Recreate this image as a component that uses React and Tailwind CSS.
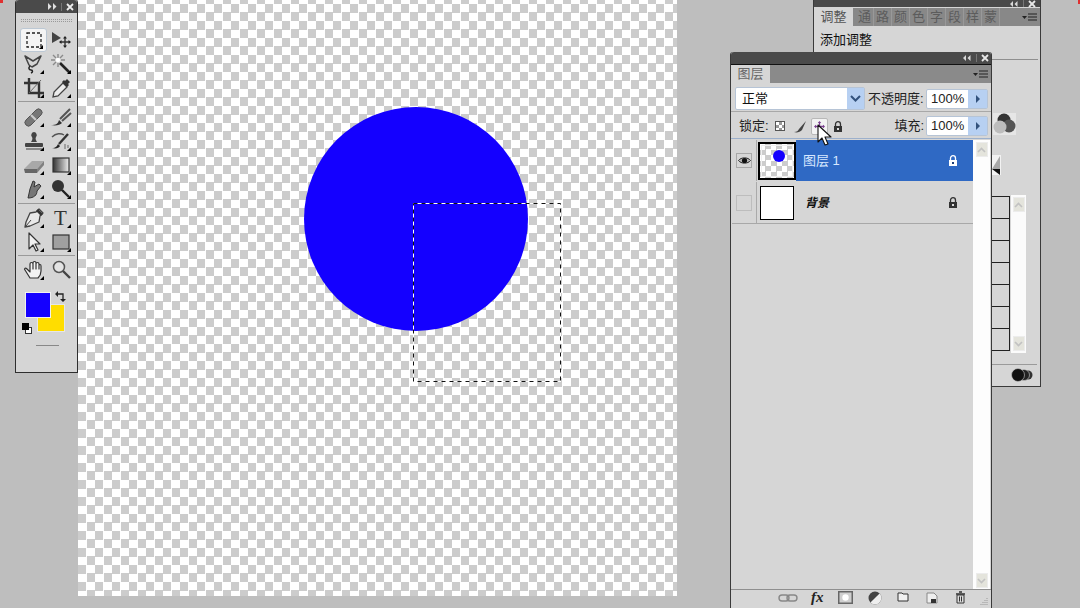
const uiFont = "font-['Liberation_Sans','Noto_Sans_CJK_SC',sans-serif]";

const Flag = () => (
  <span className="absolute right-[3px] bottom-[2px] w-0 h-0 border-l-[4px] border-l-transparent border-b-[4px] border-b-black" />
);

const Tool = ({ children, flag = true, active = false }) => (
  <div
    className={`relative w-[27px] h-[24px] flex items-center justify-center ${
      active ? "bg-[#f4f4f4] border border-[#bcc8d4] rounded-[3px]" : ""
    }`}
  >
    <svg width="22" height="22" viewBox="0 0 22 22">
      {children}
    </svg>
    {flag && <Flag />}
  </div>
);

const Sep = ({ className = "" }) => (
  <div className={`h-px mx-[2px] bg-[#9a9a9a] ${className}`} />
);

const HeaderBtns = () => (
  <div className="flex items-center gap-[4px]">
    <svg width="10" height="8" viewBox="0 0 10 8">
      <path d="M4 1L1 4l3 3zM8.5 1l-3 3 3 3z" fill="#d8d8d8" />
    </svg>
    <span className="w-px h-[8px] bg-[#777]" />
    <svg width="8" height="8" viewBox="0 0 8 8">
      <path d="M1 1l6 6M7 1l-6 6" stroke="#e8e8e8" strokeWidth="1.8" />
    </svg>
  </div>
);

const MenuIcon = () => (
  <svg width="16" height="9" viewBox="0 0 16 9">
    <path d="M0 3h5L2.5 6z" fill="#222" />
    <path d="M6 1h9M6 4h9M6 7h9" stroke="#222" strokeWidth="1.2" />
  </svg>
);

const Toolbar = () => (
  <div className="absolute left-[15px] top-0 w-[63px] h-[373px] bg-[#d5d5d5] border-x border-b border-[#2e2e2e] rounded-t-[3px]">
    <div className="h-[13px] bg-[#4a4a4a] flex items-center justify-end pr-[3px] gap-[4px] rounded-t-[3px]">
      <svg width="9" height="7" viewBox="0 0 9 7">
        <path d="M0 0l3.5 3.5L0 7zM5 0l3.5 3.5L5 7z" fill="#e0e0e0" />
      </svg>
      <span className="w-px h-[8px] bg-[#777]" />
      <svg width="8" height="8" viewBox="0 0 8 8">
        <path d="M1 1l6 6M7 1l-6 6" stroke="#eee" strokeWidth="1.8" />
      </svg>
    </div>
    <div className="mt-[6px] mx-[5px] h-[3px] border-y border-dotted border-[#999]" />

    <div className="mt-[6px] px-[4px] grid grid-cols-[27px_27px]">
      <Tool active>
        <rect x="4" y="4" width="14" height="14" fill="none" stroke="#222" strokeWidth="1.3" strokeDasharray="3 2" />
      </Tool>
      <Tool flag={false}>
        <path d="M2 3l9 6-9 5z" fill="#444" />
        <path d="M15 8v10M10 13h10" stroke="#333" strokeWidth="1.4" />
        <path d="M15 7l-2 2.5h4zM15 19l-2-2.5h4zM9 13l2.5-2v4zM21 13l-2.5-2v4z" fill="#222" />
      </Tool>
      <Tool>
        <path d="M2 3l8 5 8-5-4 8-5 3-3-2z" fill="none" stroke="#444" strokeWidth="1.5" strokeLinejoin="round" />
        <path d="M7 13c-2 2-1 4 1 4s2 2 0 3" fill="none" stroke="#222" strokeWidth="1.5" />
      </Tool>
      <Tool>
        <path d="M10 10l10 10" stroke="#222" strokeWidth="2.6" />
        <path d="M8 1v4M8 10v4M1 7h4M11 7h4M3 2l3 3M13 2l-3 3M3 12l3-3" stroke="#8a8a8a" strokeWidth="1.4" />
        <circle cx="8" cy="7" r="2.2" fill="#fff" />
      </Tool>
      <Tool>
        <path d="M6 1v15h15M1 6h15v15" fill="none" stroke="#333" strokeWidth="2.4" />
        <path d="M6 16L18 3" stroke="#666" strokeWidth="1" />
      </Tool>
      <Tool>
        <path d="M13 6l4 4-9 9-5 1 1-5z" fill="#ececec" stroke="#444" strokeWidth="1.3" />
        <path d="M12 5l5 5 2-2-1-1 2-2-3-3-2 2-1-1z" fill="#333" />
      </Tool>
    </div>
    <Sep className="mt-px" />

    <div className="mt-[3px] px-[4px] grid grid-cols-[27px_27px]">
      <Tool>
        <path d="M3 14l10-10a3 3 0 0 1 5 5L8 19a3 3 0 0 1-5-5z" fill="#777" stroke="#555" />
        <path d="M8 9l5 5" stroke="#ccc" strokeWidth="2.2" />
      </Tool>
      <Tool>
        <path d="M1 19c5 0 7-1 8-5l3 3c-2 2-6 3-11 2z" fill="#333" />
        <path d="M10 13L20 3M12 15L21 7" stroke="#555" strokeWidth="2" />
      </Tool>
      <Tool>
        <path d="M11 2a3 3 0 0 1 2 5c-1 2 0 3 1 5h-6c1-2 2-3 1-5a3 3 0 0 1 2-5z" fill="#444" />
        <rect x="2" y="13" width="18" height="4" rx="1" fill="#444" />
        <rect x="3" y="18" width="16" height="2" fill="#888" />
      </Tool>
      <Tool>
        <path d="M2 18c4 0 5-2 6-4l2 2c-1 2-4 3-8 2z" fill="#222" />
        <path d="M9 14L18 4" stroke="#333" strokeWidth="2.4" />
        <path d="M2 7c4-4 9-4 12-2" fill="none" stroke="#555" strokeWidth="1.4" />
        <path d="M15 14v5M18 15v3" stroke="#888" strokeWidth="1.4" />
      </Tool>
      <Tool>
        <path d="M1 15l8-8h12l-7 8z" fill="#a8a8a8" />
        <path d="M1 15h13v4H2z" fill="#666" />
        <path d="M14 15l7-8v4l-7 8z" fill="#808080" />
      </Tool>
      <Tool>
        <defs>
          <linearGradient id="grad" x1="0" x2="1" y1="0" y2="0">
            <stop offset="0" stopColor="#333" />
            <stop offset="1" stopColor="#eee" />
          </linearGradient>
        </defs>
        <rect x="3" y="4" width="16" height="14" fill="url(#grad)" stroke="#333" strokeWidth="1.2" />
      </Tool>
      <Tool>
        <path d="M5 20l2-9 3-8 2 1-1 5 5-3 2 2-4 5c0 4-3 7-9 7z" fill="#777" stroke="#333" />
      </Tool>
      <Tool>
        <circle cx="8" cy="8" r="6" fill="#333" />
        <path d="M12 12l7 7" stroke="#222" strokeWidth="2.4" />
      </Tool>
    </div>
    <Sep className="mt-[2px]" />

    <div className="mt-[2px] px-[4px] grid grid-cols-[27px_27px]">
      <Tool>
        <path d="M16 2l4 4-3 3-1 6-9 4-5 1 1-5 4-9 6-1z" fill="#e8e8e8" stroke="#444" strokeWidth="1.3" strokeLinejoin="round" />
        <path d="M15 2l5 5-2 2-5-5z" fill="#333" />
        <path d="M3 19l5-6" stroke="#444" />
      </Tool>
      <div className="w-[27px] h-[24px] flex items-center justify-center relative">
        <span className="font-['Liberation_Serif',serif] text-[21px] leading-none text-[#333]">T</span>
        <Flag />
      </div>
      <Tool>
        <path d="M6 2v16l4-4 3 6 2-1-3-6h5z" fill="#f0f0f0" stroke="#333" strokeWidth="1.2" strokeLinejoin="round" />
      </Tool>
      <Tool>
        <rect x="3" y="4" width="16" height="14" fill="#a0a0a0" stroke="#333" strokeWidth="1.2" />
      </Tool>
    </div>
    <Sep className="mt-px" />

    <div className="mt-[2px] px-[4px] grid grid-cols-[27px_27px]">
      <Tool>
        <path d="M4 10c-2-2-3 0-2 1l5 8h8c2-2 3-5 3-7V7c0-2-2-2-2 0v3-5c0-2-3-2-3 0v5-6c0-2-3-2-3 0v6-5c0-2-3-2-3 0v8z" fill="#f2f2f2" stroke="#333" strokeWidth="1.2" strokeLinejoin="round" />
      </Tool>
      <Tool flag={false}>
        <circle cx="9" cy="8" r="5.5" fill="#e4e4e4" stroke="#555" strokeWidth="1.5" />
        <path d="M13 12l7 7" stroke="#444" strokeWidth="2.4" />
      </Tool>
    </div>

    <div className="relative mt-[8px] h-[70px]">
      <div className="absolute left-[21px] top-[14px] w-[28px] h-[28px] bg-[#ffdd00] border border-[#e6e6e6]" />
      <div className="absolute left-[9px] top-[2px] w-[26px] h-[26px] bg-[#1400ff] border border-[#f0f0f0]" />
      <svg className="absolute left-[39px] top-0" width="12" height="12" viewBox="0 0 12 12">
        <path d="M1 4h7v7" fill="none" stroke="#222" strokeWidth="1.3" />
        <path d="M0 4l3-3v6zM8 12l-3-3h6z" fill="#222" />
      </svg>
      <div className="absolute left-[9px] top-[37px] w-[7px] h-[7px] bg-white border border-[#333]" />
      <div className="absolute left-[6px] top-[33px] w-[7px] h-[7px] bg-black" />
      <div className="absolute left-[20px] top-[55px] w-[23px] h-px bg-[#888]" />
    </div>
  </div>
);

const Canvas = () => (
  <div className="absolute left-[78px] top-0 w-[599px] h-[596px] bg-[repeating-conic-gradient(#fff_0_25%,#ccc_0_50%)] bg-[size:17px_17px] bg-[position:0_4px]">
    <div className="absolute left-[226px] top-[107px] w-[224px] h-[224px] rounded-full bg-[#1400ff]" />
    <svg className="absolute left-[335px] top-[203px]" width="148" height="179" viewBox="0 0 148 179">
      <rect x="0.5" y="0.5" width="147" height="178" fill="none" stroke="#fff" />
      <rect x="0.5" y="0.5" width="147" height="178" fill="none" stroke="#111" strokeDasharray="4 4" />
    </svg>
  </div>
);

const backTabs = ["通", "路", "颜", "色", "字", "段", "样", "蒙"];

const BackPanel = () => (
  <div className={`absolute left-[813px] top-0 w-[228px] h-[387px] flex flex-col bg-[#d6d6d6] border-r border-b border-l border-[#3a3a3a] ${uiFont}`}>
    <div className="h-[7px] bg-[#4a4a4a] flex items-center justify-end pr-[4px] overflow-hidden shrink-0">
      <HeaderBtns />
    </div>
    <div className="h-[18px] mt-px bg-[#888] flex items-stretch shrink-0">
      <div className="w-[39px] bg-[#d6d6d6] text-[#555] text-[13px] leading-[18px] text-center">调整</div>
      <div className="flex pl-[3px]">
        {backTabs.map((t) => (
          <div key={t} className="w-[18px] border-r border-[#999] text-[#5c5c5c] text-[13px] leading-[18px] text-center">
            {t}
          </div>
        ))}
      </div>
      <div className="ml-auto mr-[2px] flex items-center">
        <MenuIcon />
      </div>
    </div>
    <div className="pl-[6px] pt-[5px] h-[33px] text-[13px] leading-[18px] text-[#111] shrink-0">添加调整</div>
    <div className="h-px mr-[2px] bg-[#8f8f8f] shrink-0" />

    <div className="ml-auto w-[49px] flex flex-col">
      <div className="mt-[53px] ml-[2px] w-[23px] h-[22px] bg-[#e6e6e6] flex items-center justify-center">
        <svg width="23" height="22" viewBox="0 0 23 22">
          <circle cx="11" cy="7" r="6.5" fill="#333" />
          <circle cx="16" cy="13" r="6.5" fill="#555" />
          <circle cx="7" cy="14" r="6.5" fill="#bdbdbd" />
        </svg>
      </div>
      <svg className="mt-[20px] ml-[1px]" width="9" height="20" viewBox="0 0 9 20">
        <rect width="9" height="20" fill="#f2f2f2" />
        <path d="M8 1v13H0z" fill="#a8a8a8" />
        <path d="M0 14h8v6z" fill="#111" />
      </svg>
      <div className="mt-[20px] flex h-[158px]">
        <div className="w-[19px] mt-px h-[155px] border-r border-y border-[#222] flex flex-col">
          {[0, 1, 2, 3, 4, 5, 6].map((i) => (
            <div key={i} className="flex-1 border-b border-[#222] last:border-b-0" />
          ))}
        </div>
        <div className="ml-[1px] w-[15px] bg-[#fbfbfb] flex flex-col justify-between py-[2px] items-center">
          <ScrollBtn />
          <ScrollBtn down />
        </div>
      </div>
      <div className="mt-[11px] h-px mr-[3px] bg-[#9a9a9a]" />
      <svg className="mt-[3px] ml-[20px]" width="22" height="15" viewBox="0 0 22 15">
        <circle cx="17" cy="7" r="4.5" fill="#333" />
        <circle cx="13" cy="7" r="5.5" fill="#222" stroke="#ccc" strokeWidth="0.6" />
        <circle cx="7" cy="7" r="6.5" fill="#111" stroke="#ccc" strokeWidth="0.6" />
      </svg>
    </div>
  </div>
);

const ScrollBtn = ({ down = false }) => (
  <div className="w-[12px] h-[15px] bg-[#e4e4dc] border border-[#ececec] flex items-center justify-center">
    <svg width="9" height="6" viewBox="0 0 9 6">
      <path d={down ? "M1 1l3.5 3.5L8 1" : "M1 5l3.5-3.5L8 5"} fill="none" stroke="#c2c2c2" strokeWidth="1.6" />
    </svg>
  </div>
);

const Stepper = ({ value }) => (
  <div className="w-[62px] h-[20px] flex bg-white border border-[#b6c4d6] rounded-[2px]">
    <div className="flex-1 pl-[4px] text-[13px] leading-[18px] text-[#222] font-['Liberation_Sans',sans-serif]">{value}</div>
    <div className="w-[19px] bg-[#b7d0f2] flex items-center justify-center">
      <svg width="6" height="8" viewBox="0 0 6 8">
        <path d="M1 0l4 4-4 4z" fill="#33527c" />
      </svg>
    </div>
  </div>
);

const Lock = ({ white = false }) => (
  <svg width="10" height="11" viewBox="0 0 10 11">
    <path d="M2.5 5V3.2a2.5 2.5 0 0 1 5 0V5" fill="none" stroke={white ? "#fff" : "#333"} strokeWidth="1.3" />
    <rect x="1" y="5" width="8" height="6" fill={white ? "#fff" : "#333"} />
    <rect x="4" y="7" width="2" height="2" fill={white ? "#1d3f7a" : "#ddd"} />
  </svg>
);

const LayersPanel = () => (
  <div className={`absolute left-[730px] top-[52px] w-[262px] h-[556px] flex flex-col bg-[#d6d6d6] border-x border-[#3a3a3a] rounded-t-[3px] ${uiFont}`}>
    <div className="h-[12px] bg-[#4a4a4a] flex items-center justify-end pr-[2px] rounded-t-[3px] shrink-0">
      <HeaderBtns />
    </div>
    <div className="h-px bg-[#111] shrink-0" />
    <div className="h-[18px] bg-[#8a8a8a] flex shrink-0">
      <div className="w-[39px] bg-[#d6d6d6] text-[#666] text-[13px] leading-[18px] text-center">图层</div>
      <div className="ml-auto mr-[2px] flex items-center">
        <MenuIcon />
      </div>
    </div>

    <div className="mt-[4px] pl-[4px] flex items-center h-[23px] shrink-0">
      <div className="w-[130px] h-[23px] bg-white border border-[#b6c4d6] rounded-[2px] flex">
        <div className="flex-1 pl-[6px] text-[13px] leading-[21px] text-[#111]">正常</div>
        <div className="w-[17px] bg-[#b7d0f2] flex items-center justify-center">
          <svg width="11" height="7" viewBox="0 0 11 7">
            <path d="M1 1l4.5 4.5L10 1" fill="none" stroke="#33527c" strokeWidth="2" />
          </svg>
        </div>
      </div>
      <span className="ml-[3px] w-[56px] text-[13px] text-[#222] whitespace-nowrap">不透明度:</span>
      <span className="ml-[2px]">
        <Stepper value="100%" />
      </span>
    </div>
    <div className="mt-px h-px bg-[#a8a8a8] shrink-0" />

    <div className="flex items-center pl-[8px] pt-[2px] h-[26px] shrink-0">
      <span className="w-[30px] text-[13px] text-[#222] whitespace-nowrap">锁定:</span>
      <span className="ml-[6px] w-[10px] h-[10px] border border-[#555] bg-[repeating-conic-gradient(#999_0_25%,#fff_0_50%)] bg-[size:6px_6px]" />
      <svg className="ml-[8px]" width="14" height="13" viewBox="0 0 14 13">
        <path d="M1 12c3 0 4-1 5-3L13 1l-4 9c-2 2-5 3-8 2z" fill="#444" />
      </svg>
      <div className="ml-[4px] w-[17px] h-[17px] bg-[#f3f3f3] border border-[#b8b8b8] rounded-[2px] flex items-center justify-center">
        <svg width="11" height="11" viewBox="0 0 11 11">
          <path d="M5.5 1v9M1 5.5h9" stroke="#7a3f8f" strokeWidth="1.3" />
          <path d="M5.5 0L3.8 2h3.4zM5.5 11L3.8 9h3.4zM0 5.5L2 3.8v3.4zM11 5.5L9 3.8v3.4z" fill="#7a3f8f" />
        </svg>
      </div>
      <span className="ml-[5px] flex">
        <Lock />
      </span>
      <span className="ml-auto text-[13px] text-[#222] whitespace-nowrap">填充:</span>
      <span className="ml-[2px] mr-[3px]">
        <Stepper value="100%" />
      </span>
    </div>
    <div className="h-px bg-[#9cb0cc] shrink-0" />

    <div className="flex-1 flex min-h-0 mt-px">
      <div className="flex-1 flex flex-col ml-px">
        <div className="h-[41px] flex items-stretch">
          <div className="w-[25px] border-r border-[#aaa] flex items-center justify-center">
            <div className="w-[16px] h-[15px] border border-[#a8a8a8] flex items-center justify-center">
              <svg width="13" height="9" viewBox="0 0 13 9">
                <path d="M0.5 4.5C3 1 10 1 12.5 4.5 10 8 3 8 0.5 4.5z" fill="#bbb" stroke="#222" />
                <circle cx="6.5" cy="4.5" r="2.6" fill="#111" />
              </svg>
            </div>
          </div>
          <div className="w-[38px] ml-px h-[38px] self-center pl-[4px] border-2 border-black outline outline-1 outline-[#f0f0f0] -outline-offset-4 bg-[repeating-conic-gradient(#ccc_0_25%,#fff_0_50%)] bg-[size:11px_11px] flex items-start justify-center">
            <div className="mt-[6px] w-[12px] h-[12px] rounded-full bg-[#1400ff]" />
          </div>
          <div className="flex-1 bg-[#2f69c4] flex items-center pl-[7px] pr-[15px]">
            <span className="text-[13px] text-[#d8e8ff] whitespace-nowrap">图层 1</span>
            <span className="ml-auto flex">
              <Lock white />
            </span>
          </div>
        </div>
        <div className="h-[42px] mt-px flex items-stretch border-b border-[#a8a8a8]">
          <div className="w-[25px] border-r border-[#aaa] flex items-center justify-center">
            <div className="w-[16px] h-[16px] border border-[#bdbdbd]" />
          </div>
          <div className="w-[34px] ml-[3px] h-[34px] self-center bg-white border border-black" />
          <div className="flex-1 flex items-center pl-[11px] pr-[15px]">
            <span className="text-[12px] italic font-bold text-[#111]">背景</span>
            <span className="ml-auto flex">
              <Lock />
            </span>
          </div>
        </div>
      </div>
      <div className="w-[17px] mr-px bg-[#fdfdfd] flex flex-col justify-between items-center pt-[2px] pb-[1px]">
        <ScrollBtn />
        <ScrollBtn down />
      </div>
    </div>

    <div className="h-[19px] pb-[3px] border-t border-[#8f8f8f] relative flex items-center shrink-0">
      <svg className="ml-[47px]" width="20" height="8" viewBox="0 0 20 8">
        <rect x="1" y="1" width="10" height="6" rx="3" fill="none" stroke="#888" strokeWidth="1.4" />
        <rect x="9" y="1" width="10" height="6" rx="3" fill="none" stroke="#888" strokeWidth="1.4" />
      </svg>
      <span className="ml-[13px] w-[18px] font-['Liberation_Serif',serif] italic font-bold text-[15px] leading-none text-[#222]">
        fx
      </span>
      <svg className="ml-[9px]" width="15" height="13" viewBox="0 0 15 13">
        <rect width="15" height="13" fill="#666" />
        <rect x="1.5" y="1.5" width="12" height="10" fill="#cfcfcf" />
        <circle cx="7.5" cy="6.5" r="3.2" fill="#fff" />
      </svg>
      <svg className="ml-[15px]" width="14" height="14" viewBox="0 0 14 14">
        <circle cx="7" cy="7" r="6.5" fill="#444" />
        <path d="M11.6 2.4A6.5 6.5 0 0 1 2.4 11.6z" fill="#eee" />
      </svg>
      <svg className="ml-[15px]" width="12" height="11" viewBox="0 0 12 11">
        <path d="M1 1h4l1 1h5v7H1z" fill="#f0f0f0" stroke="#333" />
      </svg>
      <svg className="ml-[17px]" width="12" height="12" viewBox="0 0 12 12">
        <path d="M1 1h7l3 3v7H1z" fill="#eee" stroke="#888" />
        <path d="M5 7h5v4H5z" fill="#333" />
      </svg>
      <svg className="ml-[17px]" width="11" height="13" viewBox="0 0 11 13">
        <path d="M1 3h9M4 1h3" stroke="#333" strokeWidth="1.6" />
        <path d="M2 4h7v8H2z" fill="#ddd" stroke="#333" />
        <path d="M4.5 5.5v5M6.5 5.5v5" stroke="#333" />
      </svg>
      <svg className="absolute right-[3px] bottom-[2px]" width="10" height="9" viewBox="0 0 10 9">
        <path d="M9 1v1M7 3v1M9 3v1M5 5v1M7 5v1M9 5v1M3 7v1M5 7v1M7 7v1M9 7v1" stroke="#999" />
      </svg>
    </div>

    <svg className="absolute left-[86px] top-[72px]" width="15" height="24" viewBox="0 0 15 24">
      <path d="M1 1v17l4-4 3 7 3-1-3-7h6z" fill="#fff" stroke="#111" strokeWidth="1.1" strokeLinejoin="round" />
    </svg>
  </div>
);

export default function App() {
  return (
    <div className="relative w-[1080px] h-[608px] overflow-hidden bg-[#bebebe]">
      <Canvas />
      <Toolbar />
      <BackPanel />
      <LayersPanel />
      <div className="absolute left-0 top-0 w-[3px] h-[3px] bg-[#e03030]" />
      <div className="absolute right-0 top-0 w-[2px] h-[4px] bg-[#e03030]" />
    </div>
  );
}
